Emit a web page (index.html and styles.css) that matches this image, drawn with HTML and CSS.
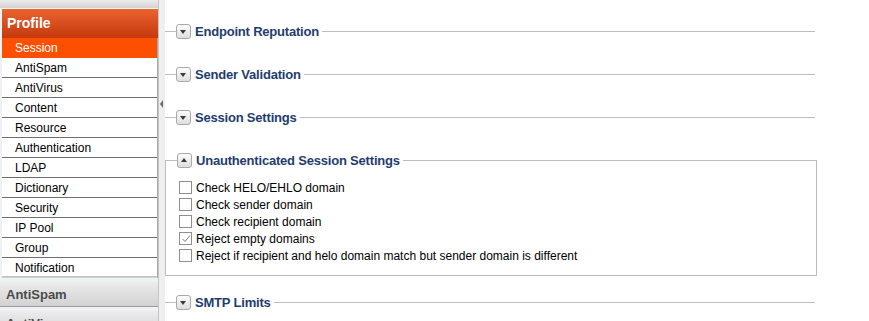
FILE: index.html
```html
<!DOCTYPE html>
<html lang="en">
<head>
  <meta charset="UTF-8">
  <title>Session Profile</title>
  <link rel="stylesheet" href="styles.css">
</head>
<body>
  <div class="app">
    <aside class="nav">
      <div class="nav-head prev"></div>
      <div class="nav-head active">Profile</div>
      <ul class="menu">
        <li class="sel">Session</li>
        <li>AntiSpam</li>
        <li>AntiVirus</li>
        <li>Content</li>
        <li>Resource</li>
        <li>Authentication</li>
        <li>LDAP</li>
        <li>Dictionary</li>
        <li>Security</li>
        <li>IP Pool</li>
        <li>Group</li>
        <li>Notification</li>
      </ul>
      <div class="nav-head">AntiSpam</div>
      <div class="nav-head">AntiVirus</div>
    </aside>

    <div class="splitter"><span class="grip"></span></div>

    <main class="content">
      <fieldset class="section">
        <legend><span class="toggle"></span>Endpoint Reputation</legend>
      </fieldset>

      <fieldset class="section">
        <legend><span class="toggle"></span>Sender Validation</legend>
      </fieldset>

      <fieldset class="section">
        <legend><span class="toggle"></span>Session Settings</legend>
      </fieldset>

      <fieldset class="section open">
        <legend><span class="toggle up"></span>Unauthenticated Session Settings</legend>
        <div class="opts">
          <label class="opt"><span class="cb"></span>Check HELO/EHLO domain</label>
          <label class="opt"><span class="cb"></span>Check sender domain</label>
          <label class="opt"><span class="cb"></span>Check recipient domain</label>
          <label class="opt"><span class="cb"><svg width="10" height="10" viewBox="0 0 10 10"><polyline points="1.5,5 4,7.5 9,1.5" fill="none" stroke="#7a7a7a" stroke-width="1"/></svg></span>Reject empty domains</label>
          <label class="opt"><span class="cb"></span>Reject if recipient and helo domain match but sender domain is different</label>
        </div>
      </fieldset>

      <fieldset class="section">
        <legend><span class="toggle"></span>SMTP Limits</legend>
      </fieldset>
    </main>
  </div>
</body>
</html>
```

FILE: styles.css
```css
body {
  margin: 0;
  font-family: "Liberation Sans", Arial, sans-serif;
  font-size: 12px;
  color: #000;
  background: #fff;
  overflow: hidden;
}
.app {
  display: flex;
  height: 321px;
}

/* left navigation */
.nav {
  width: 158px;
  flex: none;
  background: #eef2f2;
}
.nav-head {
  height: 24px;
  line-height: 25px;
  padding-left: 6px;
  font-size: 13px;
  font-weight: bold;
  color: #4a4a4a;
  background: linear-gradient(#ececec, #d2d2d2);
  border-bottom: 1px solid #9a9a9a;
  margin-top: 4px;
}
.nav-head.prev {
  height: 8px;
  margin-top: 0;
  border-bottom: 1px solid #f4f4f4;
}
.nav-head.active {
  height: 29px;
  line-height: 29px;
  margin: 0 0 0 2px;
  padding-left: 5px;
  font-size: 14px;
  color: #fff;
  border-bottom: none;
  background: linear-gradient(#ea6330, #c5390c);
}
.menu {
  list-style: none;
  margin: 0 0 0 2px;
  padding: 0;
  background: #fff;
  border-right: 1px solid #a8a8a8;
  border-bottom: 1px solid #c9d6d6;
}
.menu li {
  height: 19px;
  line-height: 20px;
  padding-left: 13px;
  border-bottom: 1px solid #6e6e6e;
}
.menu li:last-child {
  height: 18px;
  border-bottom-color: #bfbfbf;
}
.menu li.sel {
  background: #fd4f00;
  color: #fff;
  border-bottom-color: #fd4f00;
}

/* splitter */
.splitter {
  width: 6px;
  flex: none;
  background: #efefef;
  border-left: 1px solid #c4c4c4;
  position: relative;
}
.grip {
  position: absolute;
  left: 1px;
  top: 100px;
  border-style: solid;
  border-width: 4px 3px 4px 0;
  border-color: transparent #666 transparent transparent;
}

/* content */
.content {
  flex: 1;
  padding-top: 23px;
}
.section {
  width: 650px;
  margin: 0 0 27px;
  padding: 0;
  min-width: 0;
  border: none;
  border-top: 1px solid #bdbdbd;
}
.section legend {
  display: flex;
  align-items: center;
  height: 16px;
  margin-left: 11px;
  padding: 0 3px 0 0;
  font-size: 13px;
  font-weight: bold;
  letter-spacing: -0.2px;
  color: #1f3c6f;
}
.toggle {
  width: 13px;
  height: 13px;
  margin-right: 4px;
  border: 1px solid #a9a9a9;
  border-radius: 3px;
  background: linear-gradient(#fdfdfd, #dedede);
  position: relative;
}
.toggle::after {
  content: "";
  position: absolute;
  left: 3px;
  top: 5px;
  border-style: solid;
  border-width: 4px 3.5px 0 3.5px;
  border-color: #3a3a3a transparent transparent transparent;
}
.toggle.up::after {
  top: 4px;
  border-width: 0 3.5px 4px 3.5px;
  border-color: transparent transparent #3a3a3a transparent;
}
.section.open {
  width: 652px;
  box-sizing: border-box;
  border: 1px solid #bdbdbd;
  margin-bottom: 18px;
}
.opts {
  padding: 11px 0 11px 13px;
}
.opt {
  display: flex;
  align-items: center;
  height: 17px;
}
.cb {
  width: 11px;
  height: 11px;
  margin-right: 4px;
  border: 1px solid #8e8e8e;
  background: #fff;
  display: flex;
  align-items: center;
  justify-content: center;
}
```
